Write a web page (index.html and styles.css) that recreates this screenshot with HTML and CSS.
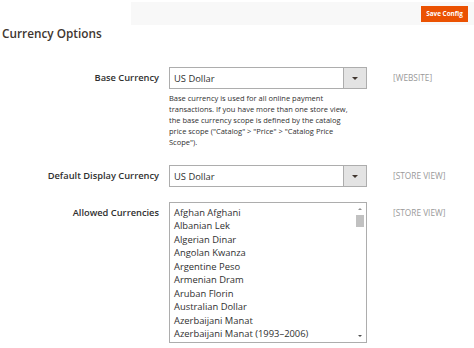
FILE: index.html
```html
<!DOCTYPE html>
<html>
<head>
<meta charset="utf-8">
<link rel="stylesheet" href="styles.css">
</head>
<body>
<div class="page-actions">
  <div class="actions-bar">
    <button class="save-btn">Save Config</button>
  </div>
</div>
<h2 class="section-title">Currency Options</h2>
<div class="form">
  <div class="row row-note">
    <div class="label">Base Currency</div>
    <div class="control">
      <div class="select"><span class="value">US Dollar</span><span class="arrow"><span class="tri"></span></span></div>
      <p class="note">Base currency is used for all online payment<br>transactions. If you have more than one store view,<br>the base currency scope is defined by the catalog<br>price scope ("Catalog" &gt; "Price" &gt; "Catalog Price<br>Scope").</p>
    </div>
    <div class="scope">[WEBSITE]</div>
  </div>
  <div class="row">
    <div class="label">Default Display Currency</div>
    <div class="control">
      <div class="select"><span class="value">US Dollar</span><span class="arrow"><span class="tri"></span></span></div>
    </div>
    <div class="scope">[STORE VIEW]</div>
  </div>
  <div class="row">
    <div class="label">Allowed Currencies</div>
    <div class="control">
      <div class="multiselect">
        <ul class="options">
          <li>Afghan Afghani</li>
          <li>Albanian Lek</li>
          <li>Algerian Dinar</li>
          <li>Angolan Kwanza</li>
          <li>Argentine Peso</li>
          <li>Armenian Dram</li>
          <li>Aruban Florin</li>
          <li>Australian Dollar</li>
          <li>Azerbaijani Manat</li>
          <li>Azerbaijani Manat (1993–2006)</li>
        </ul>
        <div class="scrollbar">
          <span class="sb-up"></span>
          <span class="sb-thumb"></span>
          <span class="sb-track"></span>
          <span class="sb-down"></span>
        </div>
      </div>
    </div>
    <div class="scope">[STORE VIEW]</div>
  </div>
</div>
</body>
</html>
```

FILE: styles.css
```css
* { box-sizing: border-box; }
html, body { margin: 0; padding: 0; background: #fff; }
body {
  font-family: "Open Sans", "Noto Sans", sans-serif;
  color: #303030;
  width: 474px;
  height: 348px;
  overflow: hidden;
}
.page-actions {
  padding: 2px 0 0 131px;
}
.actions-bar {
  height: 23px;
  background: #f8f8f8;
  display: flex;
  justify-content: flex-end;
  align-items: center;
  padding-right: 6px;
}
.save-btn {
  width: 47px;
  height: 16px;
  background: #eb5202;
  border: 0;
  color: #fff;
  font-family: "Open Sans", sans-serif;
  font-weight: 700;
  font-size: 6.4px;
  padding: 0;
}
.section-title {
  margin: 0;
  padding: 0 0 0 2px;
  font-size: 11.8px;
  font-weight: 600;
  color: #41362f;
  line-height: 16px;
}
.form {
  padding-top: 26px;
}
.row {
  display: grid;
  grid-template-columns: 159px 198px auto;
  column-gap: 10px;
  margin-bottom: 15px;
}
.row-note { margin-bottom: 17px; }
.label {
  text-align: right;
  font-size: 9.3px;
  font-weight: 600;
  color: #303030;
  line-height: 22px;
  white-space: nowrap;
}
.select {
  height: 22px;
  border: 1px solid #adadad;
  display: flex;
  align-items: center;
  background: #fff;
}
.select .value {
  flex: 1;
  padding-left: 4px;
  font-size: 9.4px;
  color: #303030;
}
.select .arrow {
  width: 23px;
  height: 100%;
  background: #e3e3e3;
  border-left: 1px solid #adadad;
  display: flex;
  align-items: center;
  justify-content: center;
}
.tri {
  width: 0; height: 0;
  border-left: 3px solid transparent;
  border-right: 3px solid transparent;
  border-top: 3px solid #41362f;
}
.note {
  margin: 4px 0 0 0;
  font-size: 7.5px;
  line-height: 11px;
  color: #303030;
  white-space: nowrap;
}
.scope {
  padding-left: 16px;
  font-size: 8.3px;
  color: #999;
  line-height: 22px;
  text-transform: uppercase;
}
.multiselect {
  height: 141px;
  border: 1px solid #adadad;
  display: flex;
  background: #fff;
}
.options {
  flex: 1;
  list-style: none;
  margin: 0;
  padding: 3px 0 0 4px;
  font-size: 9.4px;
  line-height: 13.45px;
  color: #303030;
  overflow: hidden;
}
.scrollbar {
  width: 11px;
  display: flex;
  flex-direction: column;
  align-items: center;
  padding: 3px 1px 3px 0;
}
.sb-up, .sb-down {
  width: 0; height: 0;
  border-left: 2px solid transparent;
  border-right: 2px solid transparent;
  flex: none;
  margin: 2px 0;
}
.sb-up { border-bottom: 2px solid #909090; }
.sb-down { border-top: 2px solid #505050; }
.sb-thumb {
  width: 8px;
  height: 12px;
  background: #c1c1c1;
  margin-top: 3px;
}
.sb-track { flex: 1; }
```
